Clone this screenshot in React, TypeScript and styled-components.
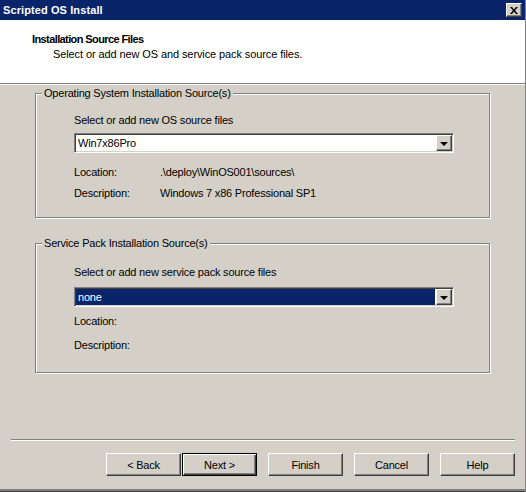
import React from "react";
import styled, { createGlobalStyle, css } from "styled-components";

const Global = createGlobalStyle`
  html, body { margin: 0; padding: 0; background: #d4d0c8; }
  body { font-family: "Liberation Sans", Arial, sans-serif; font-size: 11px; color: #000; letter-spacing: -0.2px; }
  * { box-sizing: border-box; }
`;

const FACE = "#d4d0c8";
const SHADOW = "#808080";
const DARK = "#404040";
const NAVY = "#0a246a";

const raised = css`
  background: ${FACE};
  border: 1px solid;
  border-color: #fff ${DARK} ${DARK} #fff;
  box-shadow: inset -1px -1px 0 ${SHADOW}, inset 1px 1px 0 ${FACE};
`;

const Window = styled.div`
  width: 526px;
  height: 492px;
  display: flex;
  flex-direction: column;
  background: ${FACE};
  border-right: 1px solid ${SHADOW};
  box-shadow: inset 0 -1px 0 ${DARK}, inset 0 -3px 0 ${SHADOW};
`;

const TitleBar = styled.div`
  height: 20px;
  flex: none;
  background: ${NAVY};
  display: flex;
  align-items: center;
  justify-content: space-between;
  padding: 0 3px 0 3px;
`;

const Title = styled.span`
  color: #fff;
  font-weight: bold;
  font-size: 11px;
  letter-spacing: 0.1px;
`;

const CloseButton = styled.div`
  ${raised};
  width: 16px;
  height: 14px;
  display: flex;
  align-items: center;
  justify-content: center;
`;

const Header = styled.div`
  height: 63px;
  flex: none;
  background: #fff;
  padding: 12px 0 0 32px;
`;

const Heading = styled.div`
  font-weight: bold;
  font-size: 11px;
  line-height: 14px;
  letter-spacing: -0.6px;
`;

const Subtitle = styled.div`
  font-size: 11px;
  line-height: 14px;
  letter-spacing: -0.1px;
  margin: 1px 0 0 21px;
`;

const Etched = styled.div`
  height: 2px;
  flex: none;
  border-top: 1px solid ${SHADOW};
  border-bottom: 1px solid #fff;
`;

const Content = styled.div`
  flex: 1;
  display: flex;
  flex-direction: column;
  gap: 25px;
  padding: 8px 35px 0 35px;
`;

const Group = styled.div<{ $h: number; $top: number }>`
  position: relative;
  height: ${(p) => p.$h}px;
  border: 1px solid ${SHADOW};
  box-shadow: inset 1px 1px 0 #fff, 1px 1px 0 #fff;
  padding: ${(p) => p.$top}px 0 0 38px;
  display: flex;
  flex-direction: column;
`;

const Caption = styled.span`
  position: absolute;
  top: -8px;
  left: 6px;
  padding: 0 2px;
  background: ${FACE};
  line-height: 14px;
`;

const Label = styled.div`
  line-height: 14px;
`;

const Combo = styled.div<{ $mt: number }>`
  margin-top: ${(p) => p.$mt}px;
  width: 380px;
  height: 20px;
  background: #fff;
  border: 1px solid;
  border-color: ${SHADOW} #fff #fff ${SHADOW};
  box-shadow: inset 1px 1px 0 ${DARK}, inset -1px -1px 0 ${FACE};
  padding: 1px;
  display: flex;
`;

const ComboValue = styled.div<{ $selected?: boolean }>`
  flex: 1;
  padding-left: 2px;
  line-height: 16px;
  background: ${(p) => (p.$selected ? NAVY : "#fff")};
  color: ${(p) => (p.$selected ? "#fff" : "#000")};
  margin-right: 1px;
`;

const DropButton = styled.div`
  ${raised};
  width: 16px;
  height: 16px;
  display: flex;
  align-items: center;
  justify-content: center;
`;

const Arrow = styled.div`
  width: 0;
  height: 0;
  border-left: 4px solid transparent;
  border-right: 4px solid transparent;
  border-top: 4px solid #000;
  margin-top: 1px;
`;

const Rows = styled.div<{ $mt: number; $gap: number }>`
  margin-top: ${(p) => p.$mt}px;
  display: flex;
  flex-direction: column;
  gap: ${(p) => p.$gap}px;
`;

const Row = styled.div`
  display: grid;
  grid-template-columns: 86px 1fr;
  line-height: 14px;
`;

const Footer = styled.div`
  flex: none;
  display: flex;
  flex-direction: column;
  padding: 0 10px 16px 11px;
`;

const FooterRule = styled.div`
  height: 2px;
  border-top: 1px solid ${SHADOW};
  border-bottom: 1px solid #fff;
`;

const ButtonRow = styled.div`
  margin-top: 12px;
  display: flex;
  justify-content: flex-end;
`;

const Button = styled.div<{ $gap: number; $default?: boolean }>`
  width: 75px;
  height: 23px;
  margin-left: ${(p) => p.$gap}px;
  display: flex;
  align-items: center;
  justify-content: center;
  line-height: 14px;
  padding-top: 1px;
  background: ${FACE};
  ${(p) =>
    p.$default
      ? css`
          border: 1px solid #000;
          box-shadow: inset 1px 1px 0 #fff, inset -1px -1px 0 ${DARK},
            inset -2px -2px 0 ${SHADOW};
        `
      : css`
          border: 1px solid;
          border-color: #fff ${DARK} ${DARK} #fff;
          box-shadow: inset -1px -1px 0 ${SHADOW};
        `}
`;

const CloseIcon = () => (
  <svg width="8" height="7" viewBox="0 0 8 7">
    <path d="M0 0h2l2 2.5L6 0h2L5 3.5 8 7H6L4 4.5 2 7H0l3-3.5z" fill="#000" />
  </svg>
);

const Combobox = ({ value, selected, mt }: { value: string; selected?: boolean; mt: number }) => (
  <Combo $mt={mt}>
    <ComboValue $selected={selected}>{value}</ComboValue>
    <DropButton>
      <Arrow />
    </DropButton>
  </Combo>
);

export default function App() {
  return (
    <>
      <Global />
      <Window>
        <TitleBar>
          <Title>Scripted OS Install</Title>
          <CloseButton>
            <CloseIcon />
          </CloseButton>
        </TitleBar>
        <Header>
          <Heading>Installation Source Files</Heading>
          <Subtitle>Select or add new OS and service pack source files.</Subtitle>
        </Header>
        <Etched />
        <Content>
          <Group $h={125} $top={19}>
            <Caption>Operating System Installation Source(s)</Caption>
            <Label>Select or add new OS source files</Label>
            <Combobox value="Win7x86Pro" mt={6} />
            <Rows $mt={12} $gap={7}>
              <Row>
                <span>Location:</span>
                <span>.\deploy\WinOS001\sources\</span>
              </Row>
              <Row>
                <span>Description:</span>
                <span>Windows 7 x86 Professional SP1</span>
              </Row>
            </Rows>
          </Group>
          <Group $h={130} $top={21}>
            <Caption>Service Pack Installation Source(s)</Caption>
            <Label>Select or add new service pack source files</Label>
            <Combobox value="none" selected mt={8} />
            <Rows $mt={7} $gap={10}>
              <Row>
                <span>Location:</span>
                <span></span>
              </Row>
              <Row>
                <span>Description:</span>
                <span></span>
              </Row>
            </Rows>
          </Group>
        </Content>
        <Footer>
          <FooterRule />
          <ButtonRow>
            <Button $gap={0}>&lt; Back</Button>
            <Button $gap={1} $default>
              Next &gt;
            </Button>
            <Button $gap={11}>Finish</Button>
            <Button $gap={11}>Cancel</Button>
            <Button $gap={11}>Help</Button>
          </ButtonRow>
        </Footer>
      </Window>
    </>
  );
}
